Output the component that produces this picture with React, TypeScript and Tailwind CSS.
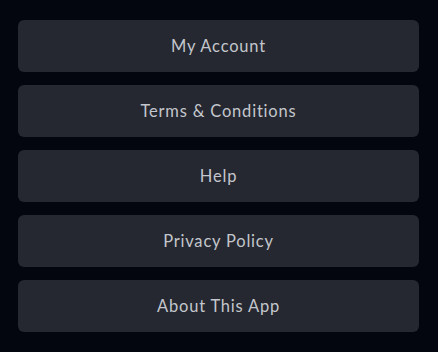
const items = ["My Account", "Terms & Conditions", "Help", "Privacy Policy", "About This App"];

export default function App() {
  return (
    <div className="min-h-screen w-full bg-[#03060f] px-[18px] pt-[20px] pb-[21px]" style={{ fontFamily: 'Lato, sans-serif' }}>
      <div className="flex flex-col gap-[13px] w-[401px]">
        {items.map((label) => (
          <button
            key={label}
            className="h-[52px] w-full rounded-[6px] bg-[#252830] text-[#c3c6cc] text-[16.5px] tracking-[0.8px] pt-[1px] flex items-center justify-center"
          >
            {label}
          </button>
        ))}
      </div>
    </div>
  );
}
